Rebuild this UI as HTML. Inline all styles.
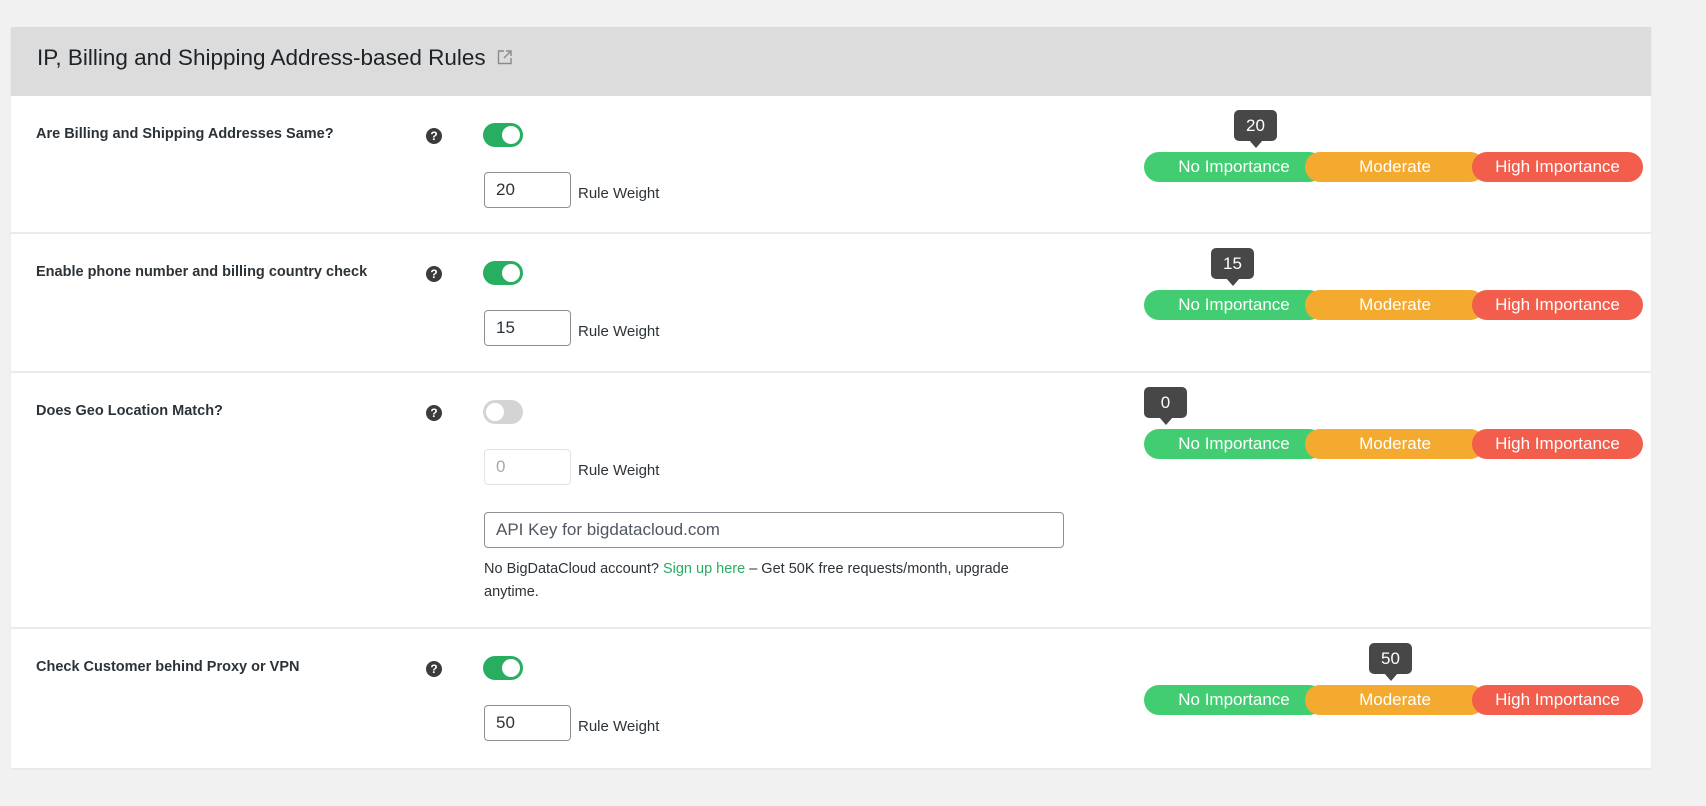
<!DOCTYPE html>
<html><head><meta charset="utf-8"><style>
*{box-sizing:border-box;margin:0;padding:0}
body{width:1706px;height:806px;background:#f1f1f1;font-family:"Liberation Sans",Arial,sans-serif;position:relative;overflow:hidden;color:#2c3338}
.panel{position:absolute;left:11px;top:27px;width:1640px;height:741px;background:#fff;box-shadow:0 1px 2px rgba(0,0,0,.06)}
.hdr{position:absolute;left:0;top:0;width:100%;height:69px;background:#dcdcdc}
.hdr h2{position:absolute;left:26px;top:18px;font-size:22.5px;font-weight:normal;color:#1d2327;white-space:nowrap}
.row{position:absolute;left:0;width:100%;border-bottom:2px solid #ebebeb}
.lbl{position:absolute;left:25px;top:29px;font-size:14.5px;font-weight:bold;color:#2c3338;white-space:nowrap}
.help{position:absolute;left:415px;top:32px;width:16px;height:16px;border-radius:50%;background:#3c3c3c;color:#fff;font-size:12px;font-weight:bold;text-align:center;line-height:16px}
.tg{position:absolute;left:472px;top:27px;width:40px;height:24px;border-radius:12px;background:#27ae60}
.tg::after{content:"";position:absolute;right:3px;top:3px;width:18px;height:18px;border-radius:50%;background:#fff}
.tg.off{background:#d4d4d4}
.tg.off::after{right:auto;left:3px}
.inp{position:absolute;left:473px;top:76px;width:87px;height:36px;border:1px solid #8c8f94;border-radius:4px;font-size:17px;padding:7px 0 0 11px;color:#2c3338}
.inp.dis{border-color:#e3e3e3;color:#a7aaad}
.rw{position:absolute;left:567px;top:89px;font-size:15px;color:#2c3338}
.bar{position:absolute;left:1133px;top:56px;width:499px;height:30px}
.seg{position:absolute;top:0;height:30px;border-radius:15px;color:#fff;font-size:17px;text-align:center;line-height:30px}
.g{left:0;width:180px;background:#43cd72}
.o{left:161px;width:180px;background:#f4aa2f}
.r{left:328px;width:171px;background:#f25d4c}
.tip{position:absolute;top:14px;width:43px;height:31px;background:#474747;border-radius:5px;color:#fff;font-size:17px;text-align:center;line-height:31px}
.tip::after{content:"";position:absolute;left:50%;margin-left:-7px;bottom:-7px;border-left:7px solid transparent;border-right:7px solid transparent;border-top:8px solid #474747}
</style></head><body>
<div class="panel">
<div class="hdr"><h2>IP, Billing and Shipping Address-based Rules <svg width="17" height="17" viewBox="0 0 17 17" style="vertical-align:-1px;margin-left:4px"><path d="M8 2H2.5v12.5H15V9" fill="none" stroke="#8a8a8a" stroke-width="1.4"/><path d="M10 2h5v5M15 2L8 9" fill="none" stroke="#8a8a8a" stroke-width="1.4"/></svg></h2></div>

<div class="row" style="top:69px;height:138px">
<div class="lbl" style="top:30px">Are Billing and Shipping Addresses Same?</div>
<div class="help">?</div>
<div class="tg"></div>
<div class="inp">20</div><div class="rw">Rule Weight</div>
<div class="tip" style="left:1223px">20</div>
<div class="bar"><div class="seg g">No Importance</div><div class="seg o">Moderate</div><div class="seg r">High Importance</div></div>
</div>

<div class="row" style="top:207px;height:139px">
<div class="lbl" style="top:30px">Enable phone number and billing country check</div>
<div class="help">?</div>
<div class="tg"></div>
<div class="inp">15</div><div class="rw">Rule Weight</div>
<div class="tip" style="left:1200px">15</div>
<div class="bar"><div class="seg g">No Importance</div><div class="seg o">Moderate</div><div class="seg r">High Importance</div></div>
</div>

<div class="row" style="top:346px;height:256px">
<div class="lbl" style="top:30px">Does Geo Location Match?</div>
<div class="help">?</div>
<div class="tg off"></div>
<div class="inp dis">0</div><div class="rw">Rule Weight</div>
<div style="position:absolute;left:473px;top:139px;width:580px;height:36px;border:1px solid #8c8f94;border-radius:4px;font-size:17px;color:#50575e;padding:7px 0 0 11px">API Key for bigdatacloud.com</div>
<div style="position:absolute;left:473px;top:185px;width:560px;font-size:14.5px;line-height:23px;color:#2c3338">No BigDataCloud account? <span style="color:#27ae60">Sign up here</span> – Get 50K free requests/month, upgrade anytime.</div>
<div class="tip" style="left:1133px">0</div>
<div class="bar"><div class="seg g">No Importance</div><div class="seg o">Moderate</div><div class="seg r">High Importance</div></div>
</div>

<div class="row" style="top:602px;height:139px;border-bottom:none">
<div class="lbl" style="top:30px">Check Customer behind Proxy or VPN</div>
<div class="help">?</div>
<div class="tg"></div>
<div class="inp">50</div><div class="rw">Rule Weight</div>
<div class="tip" style="left:1358px">50</div>
<div class="bar"><div class="seg g">No Importance</div><div class="seg o">Moderate</div><div class="seg r">High Importance</div></div>
</div>
</div>
</body></html>
